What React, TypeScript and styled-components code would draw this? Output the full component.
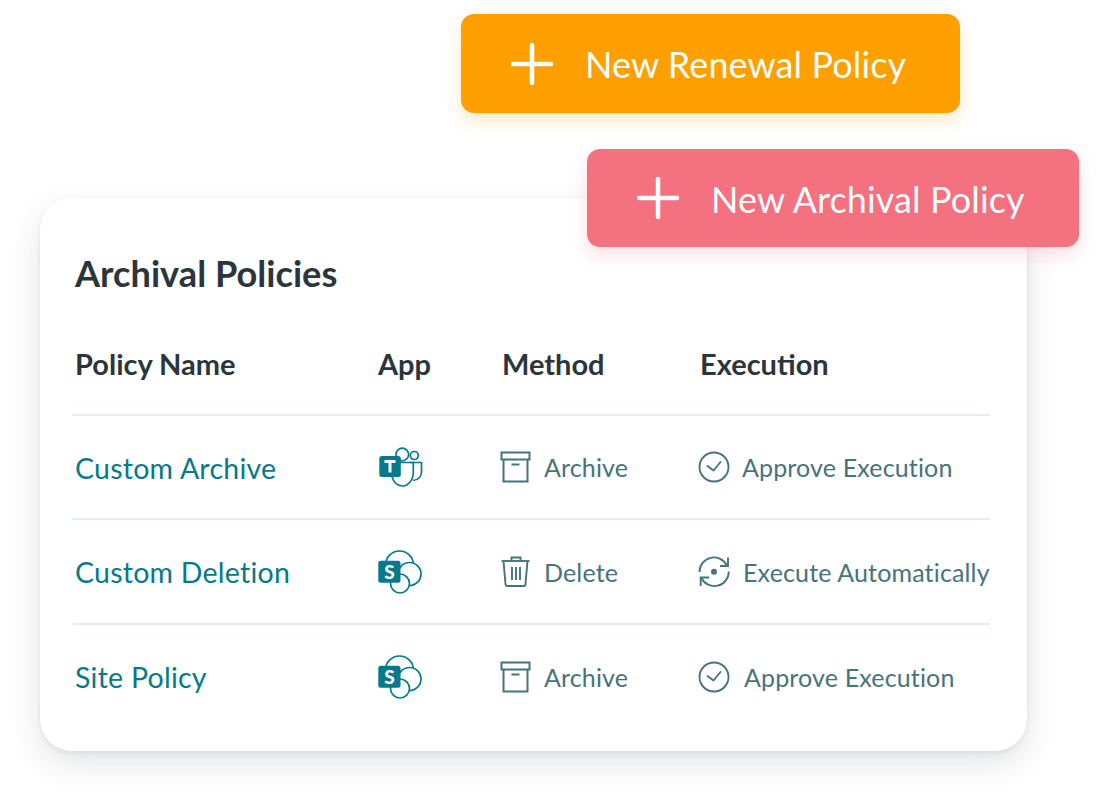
import { FC } from "react";
import styled, { createGlobalStyle } from "styled-components";

const GlobalStyle = createGlobalStyle`
  html, body {
    margin: 0;
    padding: 0;
    background: #ffffff;
    font-family: "Lato", "Liberation Sans", sans-serif;
  }
`;

const Page = styled.div`
  width: 1100px;
  height: 800px;
  overflow: hidden;
  padding-top: 14px;
  box-sizing: border-box;
`;

const ActionButton = styled.button<{ $bg: string; $shadow: string; $left: number; $width: number; $height: number }>`
  display: flex;
  align-items: center;
  position: relative;
  z-index: 2;
  box-sizing: border-box;
  margin-left: ${(p) => p.$left}px;
  width: ${(p) => p.$width}px;
  height: ${(p) => p.$height}px;
  padding: 0 0 0 50px;
  gap: 32px;
  border: none;
  border-radius: 13px;
  background: ${(p) => p.$bg};
  box-shadow: 0 8px 18px ${(p) => p.$shadow};
  color: #ffffff;
  font-family: inherit;
  font-size: 35.8px;
  font-weight: 400;
  letter-spacing: 0.2px;
`;

const ButtonLabel = styled.span`
  padding-top: 2px;
`;

const SecondRow = styled.div`
  margin-top: 36px;
`;

const Card = styled.section`
  box-sizing: border-box;
  width: 987px;
  height: 553px;
  margin: -49px 0 0 40px;
  padding: 52px 37px 0 32px;
  background: #ffffff;
  border-radius: 32px;
  box-shadow: 0 2px 5px rgba(40, 50, 60, 0.08), 0 12px 32px rgba(40, 50, 60, 0.13);
`;

const Title = styled.h2`
  margin: 0 0 17px 3px;
  font-size: 36.2px;
  line-height: 46px;
  font-weight: 700;
  color: #2b353c;
`;

const Row = styled.div<{ $head?: boolean; $last?: boolean }>`
  display: grid;
  grid-template-columns: 303px 124px 198px 1fr;
  align-items: center;
  height: ${(p) => (p.$head ? "103px" : "104.4px")};
  padding-left: 3px;
  box-sizing: border-box;
  border-bottom: ${(p) => (p.$last ? "none" : "2px solid #e6eff0")};
`;

const HeadCell = styled.div`
  font-size: 29px;
  font-weight: 700;
  color: #2b353c;
`;

const PolicyLink = styled.a`
  font-size: 28.5px;
  color: #047a8a;
  letter-spacing: 0.25px;
  padding-top: 1px;
`;

const IconCell = styled.div`
  display: flex;
  align-items: center;
`;

const InfoCell = styled.div<{ $gap: number }>`
  display: flex;
  align-items: center;
  gap: ${(p) => p.$gap}px;
  margin-left: -2px;
  font-size: 25px;
  color: #47747a;
  letter-spacing: 0.15px;
  white-space: nowrap;
`;

const PlusIcon: FC = () => (
  <svg width="42" height="42" viewBox="0 0 42 42" fill="none">
    <path d="M21 2v38M2 21h38" stroke="#fff" strokeWidth="4.5" strokeLinecap="round" />
  </svg>
);

const TeamsIcon: FC = () => (
  <svg width="45" height="41" viewBox="0 0 45 41" fill="none" stroke="#047a8a" strokeWidth="1.7">
    <circle cx="24.300" cy="7.500" r="6.300" />
    <circle cx="36.300" cy="8.500" r="4" />
    <path d="M32 15.500h11.500v9.500c0 4.500-3 8-8.500 8.500" />
    <path d="M22 15.500h13.300v10c0 7.500-5 13.500-10.800 13.500-5 0-9-4-10.500-9.500" />
    <rect x="1.300" y="9" width="21.500" height="21" rx="2.500" fill="#047a8a" stroke="none" />
    <path d="M6.500 14.500h11M12 14.500v11" stroke="#fff" strokeWidth="3" />
  </svg>
);

const SharePointIcon: FC = () => (
  <svg width="44" height="44" viewBox="0 0 44 44" fill="none" stroke="#047a8a" strokeWidth="1.7">
    <circle cx="21.500" cy="15" r="14" />
    <circle cx="31.500" cy="24" r="11.500" fill="#fff" />
    <circle cx="22" cy="33.500" r="9.500" fill="#fff" />
    <rect x="0.300" y="10.700" width="22.200" height="22" rx="2.500" fill="#047a8a" stroke="none" />
    <text x="11.400" y="28.500" textAnchor="middle" fill="#fff" stroke="none" fontFamily="Lato" fontWeight="900" fontSize="19">S</text>
  </svg>
);

const ArchiveIcon: FC = () => (
  <svg width="32" height="32" viewBox="0 0 32 32" fill="none" stroke="#47747a" strokeWidth="2">
    <rect x="1.500" y="1.500" width="28" height="7" />
    <path d="M3.500 8.500v22h24v-22" />
    <path d="M11.500 13.500h8" />
  </svg>
);

const TrashIcon: FC = () => (
  <svg width="32" height="32" viewBox="0 0 32 32" fill="none" stroke="#47747a" strokeWidth="1.9">
    <path d="M1.500 5h28" />
    <path d="M11.500 5V1.500h9V5" />
    <path d="M3.500 5l2 23a2 2 0 0 0 2 2h16a2 2 0 0 0 2-2l2-23" />
    <path d="M12 11v13M16 11v13M20 11v13" />
  </svg>
);

const CheckIcon: FC = () => (
  <svg width="32" height="32" viewBox="0 0 32 32" fill="none" stroke="#47747a" strokeWidth="1.9">
    <circle cx="16" cy="16" r="14.500" />
    <path d="M9.500 15l6 4.500 7-8.500" strokeLinecap="round" strokeLinejoin="round" />
  </svg>
);

const AutoIcon: FC = () => (
  <svg width="32" height="32" viewBox="0 0 32 32" fill="none" stroke="#47747a" strokeWidth="1.9">
    <path d="M1.500 16A14.500 14.500 0 0 1 29 9.500" />
    <path d="M30 1.500V10h-8" />
    <path d="M30.800 15.500A14.500 14.500 0 0 1 3.300 22" />
    <path d="M2.700 30v-8.500h8.500" />
    <circle cx="16" cy="15.700" r="3" fill="#47747a" stroke="none" />
  </svg>
);

interface PolicyI {
  name: string;
  app: "teams" | "sharepoint";
  method: "Archive" | "Delete";
  execution: string;
  execGap: number;
}

const policies: PolicyI[] = [
  { name: "Custom Archive", app: "teams", method: "Archive", execution: "Approve Execution", execGap: 12 },
  { name: "Custom Deletion", app: "sharepoint", method: "Delete", execution: "Execute Automatically", execGap: 13 },
  { name: "Site Policy", app: "sharepoint", method: "Archive", execution: "Approve Execution", execGap: 14 },
];

const App: FC = () => (
  <Page>
    <GlobalStyle />
    <ActionButton $bg="#ffa000" $shadow="rgba(255, 160, 0, 0.22)" $left={461} $width={499} $height={99}>
      <PlusIcon />
      <ButtonLabel>New Renewal Policy</ButtonLabel>
    </ActionButton>
    <SecondRow>
      <ActionButton $bg="#f4717f" $shadow="rgba(246, 114, 128, 0.22)" $left={587} $width={492} $height={98}>
        <PlusIcon />
        <ButtonLabel>New Archival Policy</ButtonLabel>
      </ActionButton>
    </SecondRow>
    <Card>
      <Title>Archival Policies</Title>
      <Row $head>
        <HeadCell>Policy Name</HeadCell>
        <HeadCell>App</HeadCell>
        <HeadCell>Method</HeadCell>
        <HeadCell>Execution</HeadCell>
      </Row>
      {policies.map((p, i) => (
        <Row key={p.name} $last={i === policies.length - 1}>
          <PolicyLink>{p.name}</PolicyLink>
          <IconCell>{p.app === "teams" ? <TeamsIcon /> : <SharePointIcon />}</IconCell>
          <InfoCell $gap={12}>
            {p.method === "Archive" ? <ArchiveIcon /> : <TrashIcon />}
            {p.method}
          </InfoCell>
          <InfoCell $gap={p.execGap}>
            {p.execution === "Approve Execution" ? <CheckIcon /> : <AutoIcon />}
            {p.execution}
          </InfoCell>
        </Row>
      ))}
    </Card>
  </Page>
);

export default App;
